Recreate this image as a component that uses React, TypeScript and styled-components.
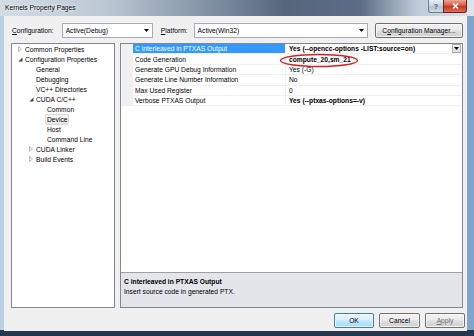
import React from 'react';
import styled, { createGlobalStyle } from 'styled-components';

const GlobalStyle = createGlobalStyle`
  html, body {
    margin: 0;
    padding: 0;
    width: 474px;
    height: 336px;
    overflow: hidden;
  }
  body {
    font-family: "Liberation Sans", Arial, sans-serif;
    font-size: 6.7px;
    color: #000;
  }
  #root {
    width: 474px;
    height: 336px;
  }
`;

const Window = styled.div`
  width: 474px;
  height: 336px;
  box-sizing: border-box;
  display: flex;
  flex-direction: column;
  background-color: #a9c2dc;
  background-image: linear-gradient(to right, #bcd0e3 0%, #a9c2dc 60%, #7fa5cd 100%);
  border-bottom: 6px solid #26384f;
`;

const TitleBar = styled.div`
  height: 16px;
  min-height: 16px;
  flex: none;
  display: flex;
  align-items: flex-start;
  justify-content: space-between;
  background-color: #8797a9;
  background-image: linear-gradient(90deg, #d3dce4 0%, #bcc8d4 22%, #8797a9 42%, #56667d 60%, #5b6c84 76%, #bfcbd8 88%, #dde5ec 100%);
`;

const Title = styled.div`
  line-height: 16px;
  padding-left: 5px;
  color: #000;
  text-shadow: 0 0 4px #fff, 0 0 2px #fff;
`;

const CaptionButtons = styled.div`
  display: flex;
  height: 13px;
  margin-right: 7px;
`;

const HelpButton = styled.div`
  width: 15px;
  height: 13px;
  box-sizing: border-box;
  display: flex;
  align-items: center;
  justify-content: center;
  font-size: 7px;
  font-weight: bold;
  color: #4a5a6c;
  border: 1px solid #6e7f93;
  border-top: none;
  border-right: none;
  border-radius: 0 0 0 3px;
  background: linear-gradient(180deg, #e8eef4 0%, #c9d5e1 45%, #b3c3d3 55%, #cfdae5 100%);
`;

const CloseButton = styled.div`
  width: 24px;
  height: 13px;
  box-sizing: border-box;
  display: flex;
  align-items: center;
  justify-content: center;
  border: 1px solid #6b2219;
  border-top: none;
  border-radius: 0 0 3px 0;
  background: linear-gradient(180deg, #e9a796 0%, #d65a44 45%, #c7361e 55%, #dc735d 100%);
`;

const Client = styled.div`
  flex: 1;
  margin: 0 7px 0 4px;
  box-sizing: border-box;
  background: #f0f0f0;
  display: flex;
  flex-direction: column;
  padding: 7px 4px 3px 7px;
`;

const Toolbar = styled.div`
  height: 15px;
  display: flex;
  align-items: center;
`;

const Label = styled.span<{ $gap: number }>`
  margin: 0 ${p => p.$gap}px 0 1px;
`;

const Select = styled.div<{ $width: number }>`
  width: ${p => p.$width}px;
  height: 15px;
  box-sizing: border-box;
  border: 1px solid #a5acb5;
  background: #fff;
  display: flex;
  align-items: center;
  padding: 0 3px;
  margin-right: 7px;
  span {
    flex: 1;
  }
`;

const Caret = () => (
  <svg width="5" height="3" viewBox="0 0 5 3">
    <path d="M0 0h5L2.5 3z" fill="#000" />
  </svg>
);

const CloseGlyph = () => (
  <svg width="7" height="6" viewBox="0 0 7 6">
    <path d="M1 0.5L6 5.5M6 0.5L1 5.5" stroke="#fff" strokeWidth="1.6" />
  </svg>
);

const Button = styled.div<{ $width: number; $default?: boolean; $dim?: boolean }>`
  width: ${p => p.$width}px;
  height: 15px;
  flex: none;
  box-sizing: border-box;
  border: 1px solid ${p => (p.$default ? '#3c7fb1' : '#707070')};
  border-radius: 2px;
  background: ${p =>
    p.$default
      ? 'linear-gradient(to bottom, #eaf6fd 0%, #d9f0fc 45%, #bee6fd 55%, #a7d9f5 100%)'
      : 'linear-gradient(to bottom, #f2f2f2 0%, #ebebeb 45%, #dddddd 55%, #cfcfcf 100%)'};
  box-shadow: inset 0 0 0 1px rgba(255, 255, 255, 0.7);
  display: flex;
  align-items: center;
  justify-content: center;
  color: ${p => (p.$dim ? '#6f6f6f' : '#000')};
`;

const Main = styled.div`
  display: flex;
  gap: 5px;
  height: 265px;
  margin-top: 5px;
`;

const Tree = styled.div`
  width: 104px;
  flex: none;
  box-sizing: border-box;
  border: 1px solid #828790;
  background: #fff;
`;

const TreeRow = styled.div<{ $level: number }>`
  height: 10px;
  display: flex;
  align-items: center;
  padding-left: ${p => 3 + p.$level * 11}px;
`;

const Expander = styled.span`
  width: 10px;
  flex: none;
  display: flex;
  align-items: center;
  padding-left: 3px;
  box-sizing: border-box;
`;

const TreeText = styled.span<{ $selected?: boolean }>`
  padding: 0 1px;
  line-height: 9px;
  border: 1px solid ${p => (p.$selected ? '#d9d9d9' : 'transparent')};
  background: ${p => (p.$selected ? 'linear-gradient(#f8f8f8, #e5e5e5)' : 'transparent')};
  border-radius: 2px;
  margin-left: -2px;
`;

const Collapsed = () => (
  <svg width="4" height="6" viewBox="0 0 4 6">
    <path d="M0.5 0.5L3.5 3L0.5 5.5z" fill="#fff" stroke="#a6a6a6" strokeWidth="0.8" />
  </svg>
);

const Expanded = () => (
  <svg width="5" height="5" viewBox="0 0 5 5">
    <path d="M4.5 0.5V4.5H0.5z" fill="#404040" />
  </svg>
);

const PropsPanel = styled.div`
  flex: 1;
  box-sizing: border-box;
  border: 1px solid #828790;
  display: flex;
  flex-direction: column;
  position: relative;
  background: #fff;
`;

const Grid = styled.div`
  flex: 1;
  background: #fff;
`;

const GridRow = styled.div`
  height: 10.4px;
  display: grid;
  grid-template-columns: 12px 153px 1fr;
  border-bottom: 1px solid #f0f0f0;
  box-sizing: border-box;
`;

const Margin = styled.div`
  background: #f0f0f0;
`;

const NameCell = styled.div<{ $active?: boolean }>`
  display: flex;
  align-items: center;
  padding-left: 2px;
  background: ${p => (p.$active ? '#3399ff' : 'transparent')};
  color: ${p => (p.$active ? '#fff' : '#000')};
  border-right: 1px solid #f0f0f0;
`;

const ValueCell = styled.div<{ $bold?: boolean }>`
  display: flex;
  align-items: center;
  padding-left: 3px;
  font-weight: ${p => (p.$bold ? 'bold' : 'normal')};
  span {
    flex: 1;
  }
`;

const DropButton = styled.div`
  width: 9px;
  height: 9px;
  box-sizing: border-box;
  border: 1px solid #a5acb5;
  background: linear-gradient(#f4f4f4, #dcdcdc);
  display: flex;
  align-items: center;
  justify-content: center;
  margin-right: 1px;
`;

const Description = styled.div`
  height: 35px;
  flex: none;
  box-sizing: border-box;
  border-top: 1px solid #a0a0a0;
  background: #e2e5e9;
  padding: 4px 3px;
  line-height: 10px;
  b {
    display: block;
  }
`;

const Ellipse = styled.svg`
  position: absolute;
  left: 158px;
  top: 9px;
`;

const ButtonRow = styled.div`
  display: flex;
  justify-content: flex-end;
  gap: 5px;
  margin: 5px -2px 0 0;
  height: 15px;
`;

const tree: { label: string; level: number; state?: 'open' | 'closed'; selected?: boolean }[] = [
  { label: 'Common Properties', level: 0, state: 'closed' },
  { label: 'Configuration Properties', level: 0, state: 'open' },
  { label: 'General', level: 1 },
  { label: 'Debugging', level: 1 },
  { label: 'VC++ Directories', level: 1 },
  { label: 'CUDA C/C++', level: 1, state: 'open' },
  { label: 'Common', level: 2 },
  { label: 'Device', level: 2, selected: true },
  { label: 'Host', level: 2 },
  { label: 'Command Line', level: 2 },
  { label: 'CUDA Linker', level: 1, state: 'closed' },
  { label: 'Build Events', level: 1, state: 'closed' },
];

const props: { name: string; value: string; bold?: boolean }[] = [
  { name: 'C interleaved in PTXAS Output', value: 'Yes (--opencc-options -LIST:source=on)', bold: true },
  { name: 'Code Generation', value: 'compute_20,sm_21', bold: true },
  { name: 'Generate GPU Debug Information', value: 'Yes (-G)' },
  { name: 'Generate Line Number Information', value: 'No' },
  { name: 'Max Used Register', value: '0' },
  { name: 'Verbose PTXAS Output', value: 'Yes (--ptxas-options=-v)', bold: true },
];

export default function App() {
  return (
    <>
      <GlobalStyle />
      <Window>
        <TitleBar>
          <Title>Kernels Property Pages</Title>
          <CaptionButtons>
            <HelpButton>?</HelpButton>
            <CloseButton>
              <CloseGlyph />
            </CloseButton>
          </CaptionButtons>
        </TitleBar>

        <Client>
          <Toolbar>
            <Label $gap={8}>
              <u>C</u>onfiguration:
            </Label>
            <Select $width={93}>
              <span>Active(Debug)</span>
              <Caret />
            </Select>
            <Label $gap={6}>
              <u>P</u>latform:
            </Label>
            <Select $width={178}>
              <span>Active(Win32)</span>
              <Caret />
            </Select>
            <Button $width={88}>
              <span>
                C<u>o</u>nfiguration Manager...
              </span>
            </Button>
          </Toolbar>

          <Main>
            <Tree>
              {tree.map(item => (
                <TreeRow key={item.label} $level={item.level}>
                  <Expander>
                    {item.state === 'open' && <Expanded />}
                    {item.state === 'closed' && <Collapsed />}
                  </Expander>
                  <TreeText $selected={item.selected}>{item.label}</TreeText>
                </TreeRow>
              ))}
            </Tree>

            <PropsPanel>
              <Grid>
                {props.map((p, i) => (
                  <GridRow key={p.name}>
                    <Margin />
                    <NameCell $active={i === 0}>{p.name}</NameCell>
                    <ValueCell $bold={p.bold}>
                      <span>{p.value}</span>
                      {i === 0 && (
                        <DropButton>
                          <Caret />
                        </DropButton>
                      )}
                    </ValueCell>
                  </GridRow>
                ))}
              </Grid>
              <Description>
                <b>C interleaved in PTXAS Output</b>
                Insert source code in generated PTX.
              </Description>
              <Ellipse width="80" height="15" viewBox="0 0 80 15">
                <ellipse cx="40" cy="7.5" rx="38.5" ry="6" fill="none" stroke="#d42020" strokeWidth="1.3" />
              </Ellipse>
            </PropsPanel>
          </Main>

          <ButtonRow>
            <Button $width={40} $default>
              OK
            </Button>
            <Button $width={41}>Cancel</Button>
            <Button $width={40} $dim>
              <span>
                <u>A</u>pply
              </span>
            </Button>
          </ButtonRow>
        </Client>
      </Window>
    </>
  );
}
